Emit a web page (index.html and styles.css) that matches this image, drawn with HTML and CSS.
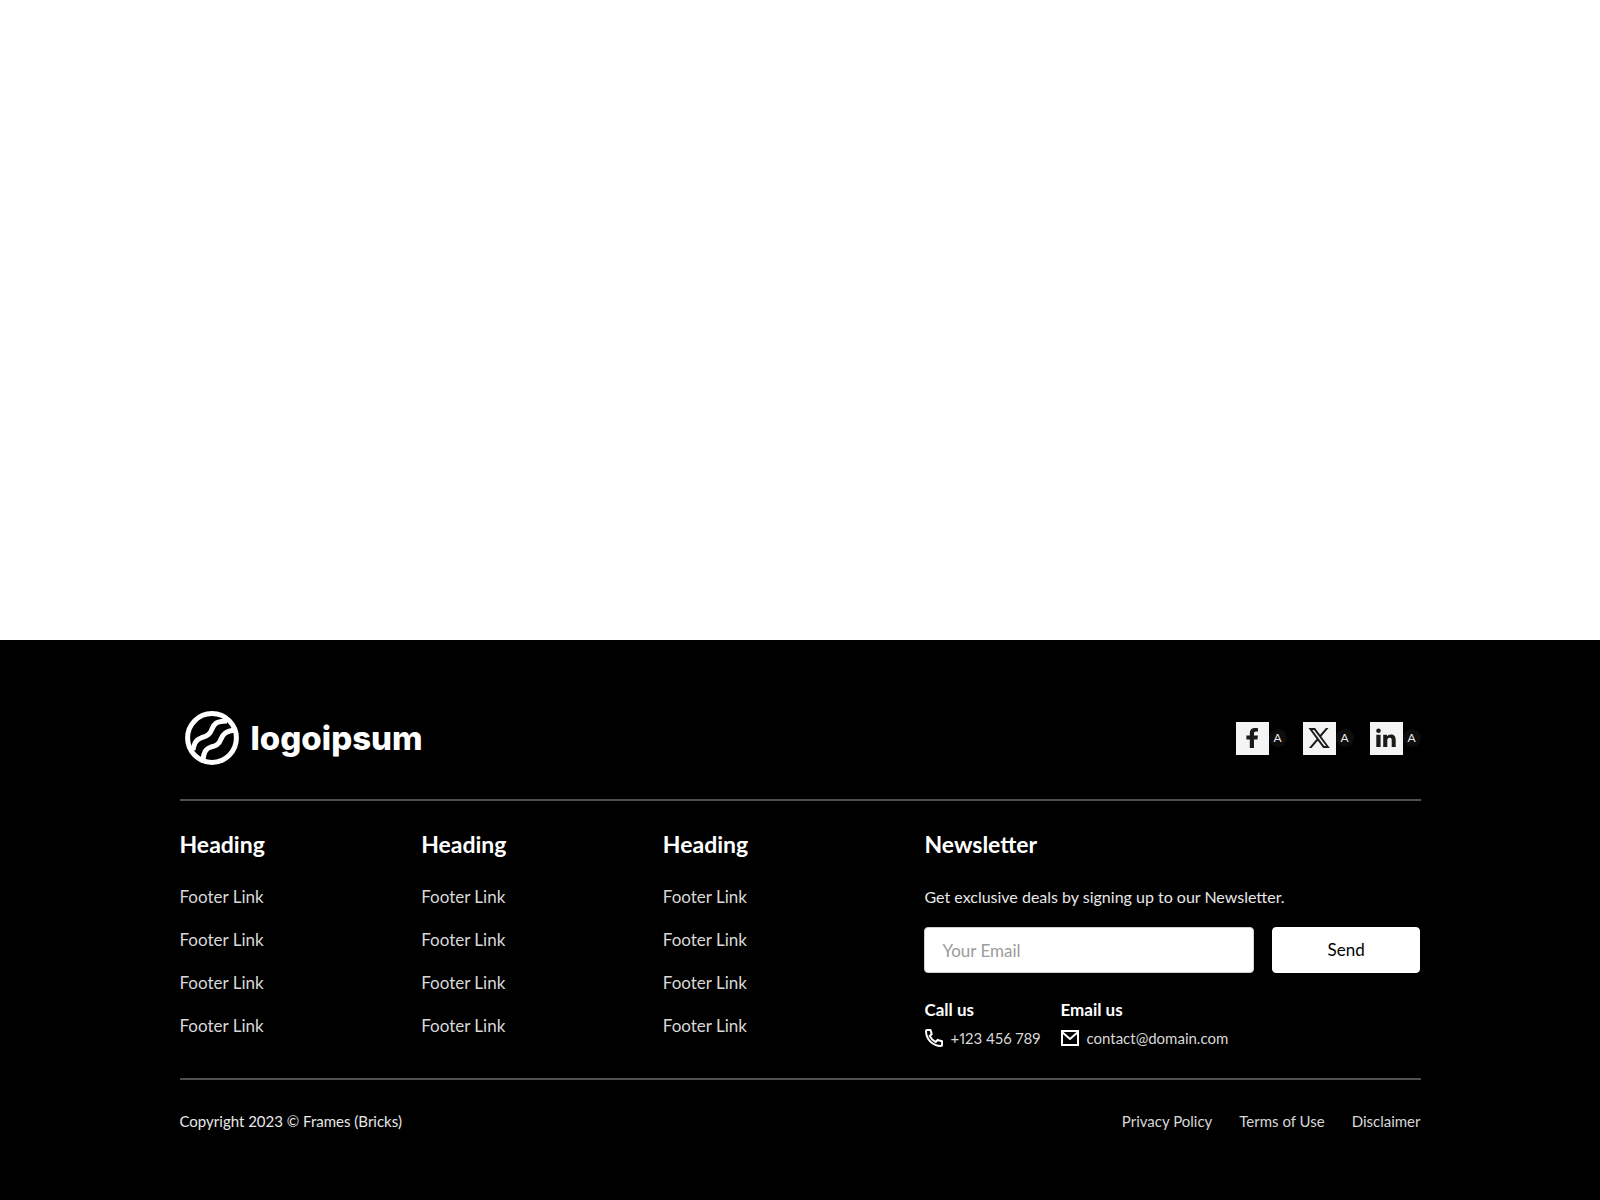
FILE: index.html
```html
<!DOCTYPE html>
<html lang="en">
<head>
<meta charset="utf-8">
<meta name="viewport" content="width=device-width, initial-scale=1">
<title>Frames</title>
<link rel="stylesheet" href="styles.css">
</head>
<body>
<main class="page"></main>
<footer class="footer">
  <div class="container">
    <div class="top">
      <a class="logo" href="#" aria-label="logoipsum">
        <svg class="logo-mark" viewBox="0 0 54 54" fill="none" stroke="#fff" stroke-width="5">
          <circle cx="27" cy="27" r="24.400"/>
          <path d="M42 10C31 10 29 13 27 18C25 24 21 25 16 27C10 29 9 34 8 39"/>
          <path d="M50 19C41 20 38 23 36 28C34 34 30 35 26 36C20 38 19 42 18 48"/>
        </svg>
        <span class="logo-text">logoipsum</span>
      </a>
      <ul class="social">
        <li><a class="social-link" href="#"><span class="social-box"><svg viewBox="0 0 24 24"><path d="M14 22v-8.600h3.400l.6-4H14V7.300c0-1.100.5-1.800 2-1.800h2V2.200C17 2.100 16 2 14.900 2 11.800 2 9.800 3.800 9.800 6.900v2.500H6.400v4h3.400V22z"/></svg></span><span class="badge">A</span></a></li>
        <li><a class="social-link" href="#"><span class="social-box"><svg viewBox="0 0 24 24"><path fill-rule="evenodd" d="M1.500 2h6.600l5 6.800L18.900 2h2.600l-7.200 8.400L22.800 22h-6.600l-5.400-7.300L4.500 22H1.900l7.700-9zM5.300 4l11.900 16h1.900L7.100 4z"/></svg></span><span class="badge">A</span></a></li>
        <li><a class="social-link" href="#"><span class="social-box"><svg viewBox="0 0 24 24"><path d="M2.300 8.700h4.300V21H2.300zM4.500 2.500a2.300 2.300 0 1 1 0 4.600 2.300 2.300 0 0 1 0-4.600zM9.200 8.700H13v1.700c.7-1.200 2.100-2 3.900-2 4 0 4.800 2.600 4.800 6V21h-4v-5.900c0-1.500 0-3.300-2-3.300-2.100 0-2.400 1.600-2.400 3.200v6H9.200z"/></svg></span><span class="badge">A</span></a></li>
      </ul>
    </div>
    <div class="middle">
      <nav class="columns" aria-label="Footer">
        <div class="column">
          <h2>Heading</h2>
          <ul><li><a href="#">Footer Link</a></li><li><a href="#">Footer Link</a></li><li><a href="#">Footer Link</a></li><li><a href="#">Footer Link</a></li></ul>
        </div>
        <div class="column">
          <h2>Heading</h2>
          <ul><li><a href="#">Footer Link</a></li><li><a href="#">Footer Link</a></li><li><a href="#">Footer Link</a></li><li><a href="#">Footer Link</a></li></ul>
        </div>
        <div class="column">
          <h2>Heading</h2>
          <ul><li><a href="#">Footer Link</a></li><li><a href="#">Footer Link</a></li><li><a href="#">Footer Link</a></li><li><a href="#">Footer Link</a></li></ul>
        </div>
      </nav>
      <section class="newsletter">
        <h2>Newsletter</h2>
        <p class="intro">Get exclusive deals by signing up to our Newsletter.</p>
        <form class="form">
          <input type="email" placeholder="Your Email" aria-label="Your Email">
          <button type="submit">Send</button>
        </form>
        <div class="contacts">
          <div>
            <h3>Call us</h3>
            <a class="contact" href="tel:+123456789"><svg viewBox="0 0 20 20"><path d="M3 2h3.500l1.200 4.200-2 1.700c1.300 2.800 3.200 4.700 6 6.100l1.900-2 4.400 1.300V17c0 .6-.4 1-1 1C8.700 18 2 11.300 2 3c0-.6.400-1 1-1z"/></svg>+123 456 789</a>
          </div>
          <div>
            <h3>Email us</h3>
            <a class="contact" href="mailto:contact@domain.com"><svg viewBox="0 0 20 20"><path d="M2 3h16v14H2zM2 4l8 7 8-7"/></svg>contact@domain.com</a>
          </div>
        </div>
      </section>
    </div>
    <div class="bottom">
      <p>Copyright 2023 © Frames (Bricks)</p>
      <ul class="legal"><li><a href="#">Privacy Policy</a></li><li><a href="#">Terms of Use</a></li><li><a href="#">Disclaimer</a></li></ul>
    </div>
  </div>
</footer>
</body>
</html>
```
FILE: styles.css
```css
* { box-sizing: border-box; }
body {
  margin: 0;
  min-height: 100vh;
  display: flex;
  flex-direction: column;
  background: #fff;
  font-family: Lato, "Open Sans", sans-serif;
  font-size: 17px;
  line-height: 24px;
}
h2, h3, p, ul { margin: 0; padding: 0; }
ul { list-style: none; }
a { color: inherit; text-decoration: none; }
.page { flex: 1; }
.footer { background: #000; color: #e8e8e8; padding: 64px 40px 67px; }
.container { max-width: 1241px; margin: 0 auto; }
.top {
  display: flex;
  align-items: center;
  justify-content: space-between;
  padding: 7px 0 34px;
  border-bottom: 2px solid #505050;
}
.logo { display: flex; align-items: center; gap: 12px; padding-left: 5px; color: #fff; }
.logo-mark { width: 54px; height: 54px; }
.logo-text { font-family: Inter, sans-serif; font-size: 33px; font-weight: 800; line-height: 40px; }
.social { display: flex; gap: 16px; }
.social-link { display: flex; align-items: center; }
.social-box { display: grid; place-items: center; width: 33px; height: 33px; background: #f4f4f4; }
.social-box svg { width: 24px; height: 24px; fill: #1a1a1a; }
.badge {
  display: grid;
  place-items: center;
  width: 18px;
  height: 18px;
  border-radius: 50%;
  background: #0d0d0d;
  color: #e8e8e8;
  font-size: 12px;
  line-height: 18px;
}
.middle {
  display: grid;
  grid-template-columns: 58fr 42fr;
  gap: 60px;
  padding: 30px 0 28px;
  border-bottom: 2px solid #505050;
}
.columns { display: grid; grid-template-columns: repeat(3, 1fr); gap: 40px; }
h2 { color: #fff; font-size: 23px; line-height: 26px; font-weight: 700; margin-bottom: 28px; }
.column ul { display: grid; gap: 19px; }
.column li { color: #d8d8d8; }
.intro { font-size: 16px; margin-bottom: 18px; }
.form { display: grid; grid-template-columns: 330fr 149fr; gap: 18px; margin-bottom: 25px; }
.form input, .form button {
  min-width: 0;
  height: 46px;
  border: 1px solid #d0d0d0;
  border-radius: 4px;
  background: #fff;
  font: inherit;
}
.form input { padding: 0 17px; }
.form input::placeholder { color: #9b9b9b; opacity: 1; }
.form button { color: #000; border-color: #fff; }
.contacts { display: flex; gap: 20px; }
h3 { color: #fff; font-size: 17px; line-height: 24px; font-weight: 700; margin-bottom: 4px; }
.contact {
  display: flex;
  align-items: center;
  gap: 6px;
  font-size: 15px;
  font-variant-numeric: proportional-nums;
  color: #d8d8d8;
}
.contact svg { width: 20px; height: 20px; fill: none; stroke: #fff; stroke-width: 2; }
.bottom { display: flex; justify-content: space-between; padding-top: 29px; font-size: 15px; }
.legal { display: flex; gap: 27px; color: #d8d8d8; }
```
